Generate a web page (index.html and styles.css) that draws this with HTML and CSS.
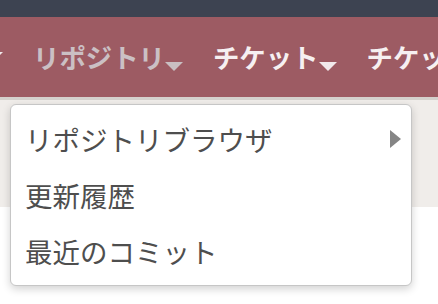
FILE: index.html
```html
<!DOCTYPE html>
<html lang="ja">
<head>
<meta charset="utf-8">
<link rel="stylesheet" href="styles.css">
</head>
<body>
<div class="page">
  <div class="topbar"></div>
  <nav class="mainnav">
    <span class="nav-item nav-partial"><span class="caret"></span></span>
    <a class="nav-item nav-dim">リポジトリ<span class="caret"></span></a>
    <a class="nav-item">チケット<span class="caret"></span></a>
    <a class="nav-item">チケット<span class="caret"></span></a>
  </nav>
  <div class="strip"></div>
  <div class="content-top"></div>
  <div class="content"></div>
  <ul class="dropdown">
    <li class="dropdown-item has-sub">リポジトリブラウザ<span class="sub-arrow"></span></li>
    <li class="dropdown-item">更新履歴</li>
    <li class="dropdown-item">最近のコミット</li>
  </ul>
</div>
</body>
</html>
```
FILE: styles.css
```css
html, body {
  margin: 0;
  padding: 0;
  background: #ffffff;
}
.page {
  position: relative;
  width: 438px;
  height: 304px;
  overflow: hidden;
  font-family: "Noto Sans CJK JP", "Noto Sans", sans-serif;
}
.topbar {
  height: 17px;
  background: #3d4351;
}
.mainnav {
  height: 80px;
  background: #9d5b63;
  display: flex;
  align-items: center;
  white-space: nowrap;
  overflow: hidden;
  gap: 30px;
  padding-left: 0;
}
.nav-item {
  display: inline-flex;
  align-items: flex-end;
  font-size: 26.4px;
  font-weight: bold;
  color: #f6f0f1;
  line-height: 30px;
  text-decoration: none;
  flex-shrink: 0;
}
.nav-partial {
  margin-left: -15px;
}
.nav-dim {
  color: #cbc0c4;
}
.caret {
  display: inline-block;
  width: 0;
  height: 0;
  border-left: 9px solid transparent;
  border-right: 9px solid transparent;
  border-top: 9px solid #f1e9eb;
  margin-bottom: 1px;
}
.nav-dim .caret {
  border-top-color: #c9bfc2;
}
.strip {
  height: 3px;
  background: #d5d1cd;
}
.content-top {
  height: 107px;
  background: #f0edea;
}
.content {
  height: 97px;
  background: #ffffff;
}
.dropdown {
  position: absolute;
  left: 10px;
  top: 104px;
  width: 400px;
  margin: 0;
  padding: 6px 0;
  list-style: none;
  background: #ffffff;
  border: 1px solid #c6c6c6;
  border-radius: 6px;
  box-shadow: 0 3px 8px rgba(0, 0, 0, 0.18);
}
.dropdown-item {
  display: flex;
  align-items: center;
  justify-content: space-between;
  height: 56px;
  padding: 0 10px 0 14px;
  font-size: 27.5px;
  color: #4e4e4e;
}
.sub-arrow {
  width: 0;
  height: 0;
  border-top: 9px solid transparent;
  border-bottom: 9px solid transparent;
  border-left: 11px solid #858585;
}
```
